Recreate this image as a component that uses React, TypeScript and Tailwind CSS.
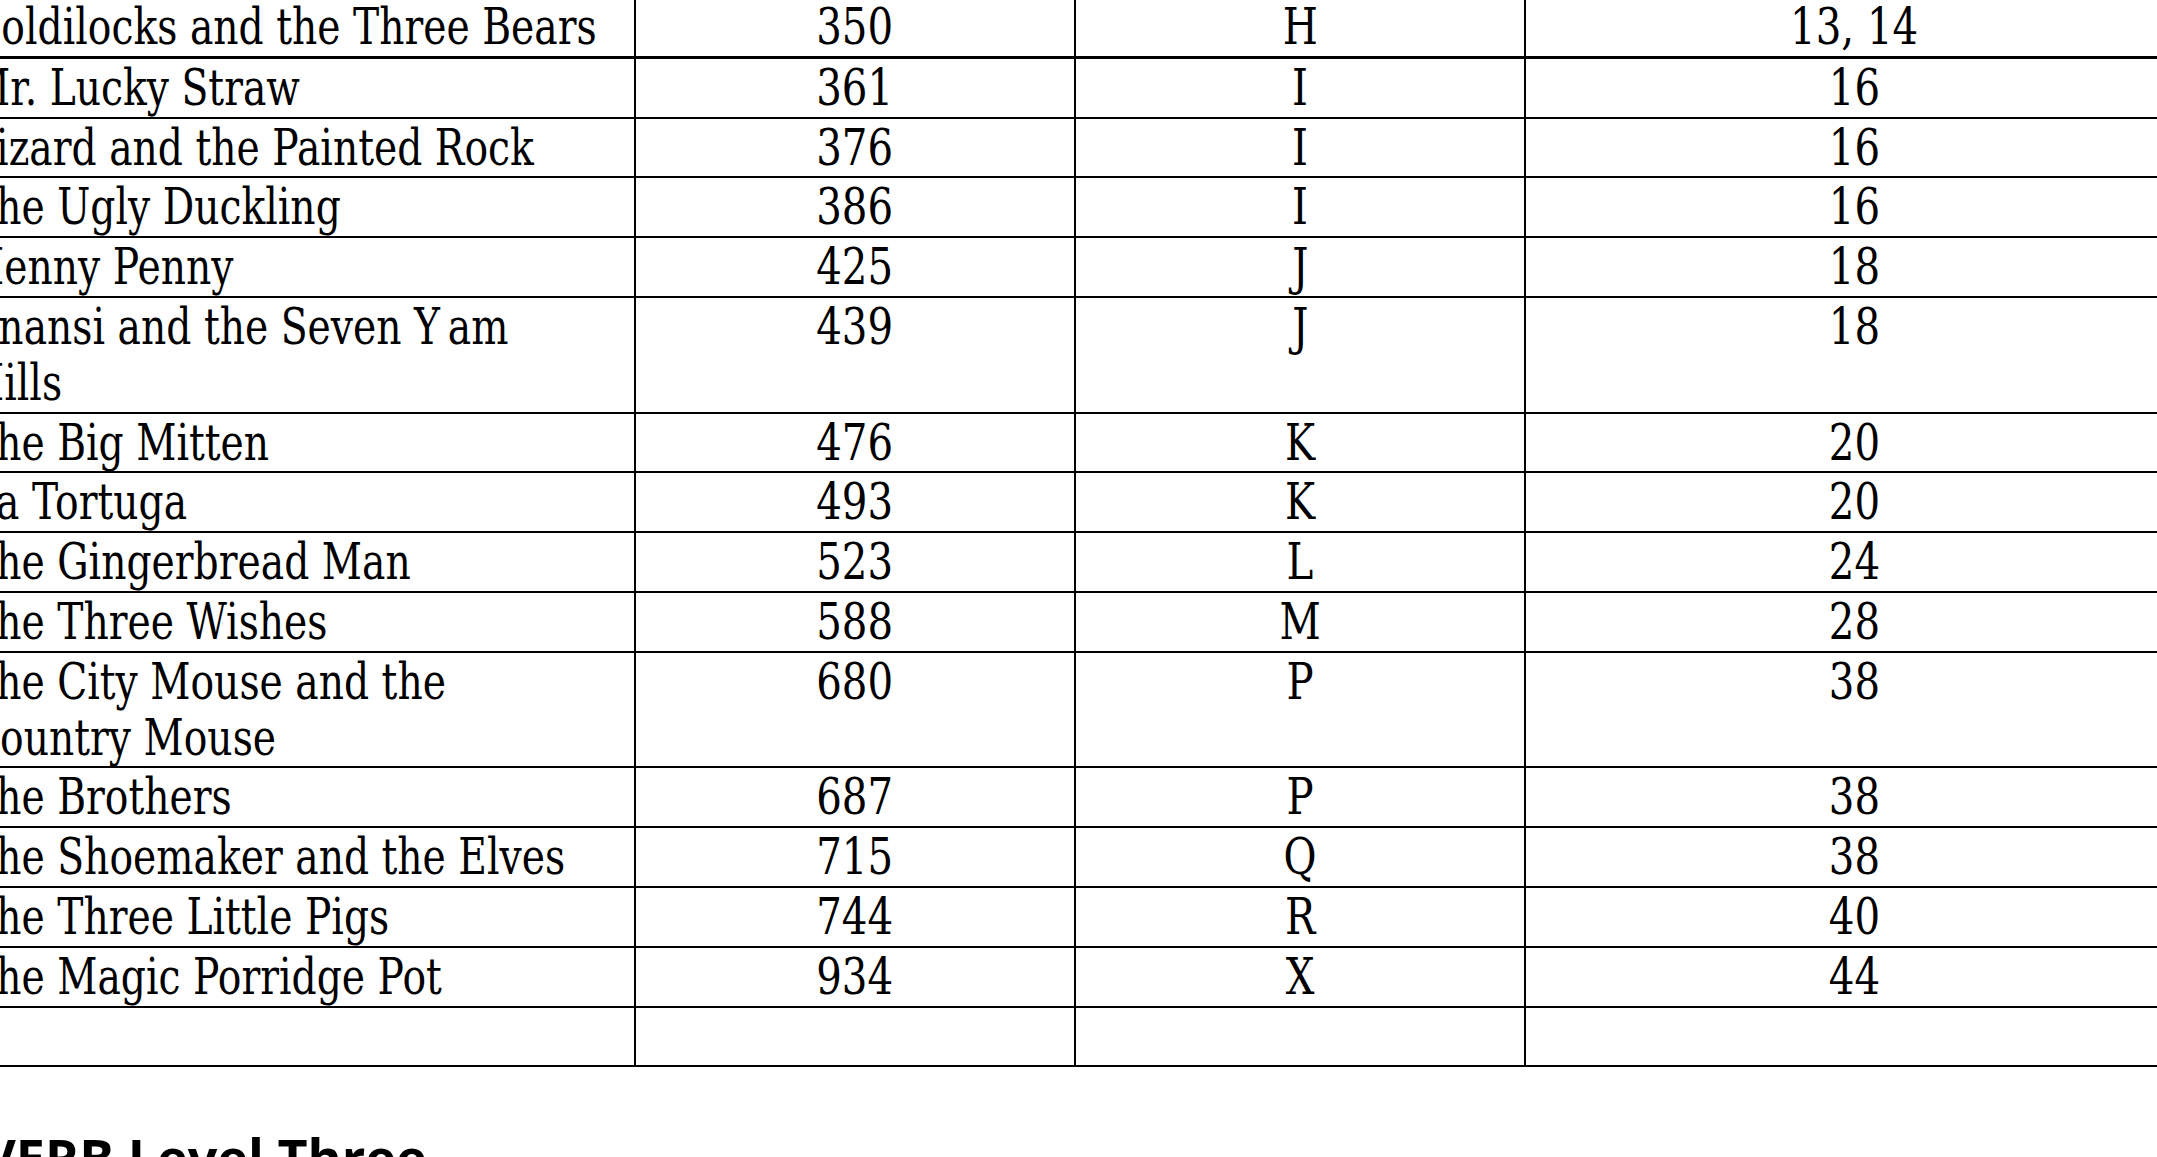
const rows: [string[], string, string, string][] = [
  [["Goldilocks and the Three Bears"], "350", "H", "13, 14"],
  [["Mr. Lucky Straw"], "361", "I", "16"],
  [["Lizard and the Painted Rock"], "376", "I", "16"],
  [["The Ugly Duckling"], "386", "I", "16"],
  [["Henny Penny"], "425", "J", "18"],
  [["Anansi and the Seven Y\u2009am", "Hills"], "439", "J", "18"],
  [["The Big Mitten"], "476", "K", "20"],
  [["La Tortuga"], "493", "K", "20"],
  [["The Gingerbread Man"], "523", "L", "24"],
  [["The Three Wishes"], "588", "M", "28"],
  [["The City Mouse and the", "Country Mouse"], "680", "P", "38"],
  [["The Brothers"], "687", "P", "38"],
  [["The Shoemaker and the Elves"], "715", "Q", "38"],
  [["The Three Little Pigs"], "744", "R", "40"],
  [["The Magic Porridge Pot"], "934", "X", "44"],
  [[""], "", "", ""],
];

const cell = "border-2 border-black px-2 pt-0 pb-[2px] align-top";

export default function App() {
  return (
    <div className="min-h-screen overflow-hidden bg-white text-black">
      <table className="-ml-[40px] -mt-[4px] w-[2222px] table-fixed border-collapse font-['DejaVu_Serif',serif] text-[51px] leading-[55.8px]">
        <colgroup>
          <col className="w-[674px]" />
          <col className="w-[440px]" />
          <col className="w-[450px]" />
          <col className="w-[658px]" />
        </colgroup>
        <tbody>
          {rows.map(([title, lexile, guided, dra], i) => (
            <tr key={i}>
              <td className={`${cell} text-left ${i === 0 ? "border-b-[3px]" : ""}`}>
                <span className="inline-block origin-left translate-y-[1px] scale-x-[0.77] whitespace-nowrap">
                  {title.map((line, j) => (
                    <span key={j} className="block">
                      {line || "\u00a0"}
                    </span>
                  ))}
                </span>
              </td>
              {[lexile, guided, dra].map((v, k) => (
                <td key={k} className={`${cell} text-center ${i === 0 ? "border-b-[3px]" : ""}`}>
                  <span className="inline-block origin-center translate-y-[1px] scale-x-[0.79] whitespace-nowrap">
                    {v || "\u00a0"}
                  </span>
                </td>
              ))}
            </tr>
          ))}
        </tbody>
      </table>
      <h2 className="-ml-[18px] mt-[64px] font-['Open_Sans',sans-serif] text-[52px] font-bold leading-none">
        VERB Level Three
      </h2>
    </div>
  );
}
